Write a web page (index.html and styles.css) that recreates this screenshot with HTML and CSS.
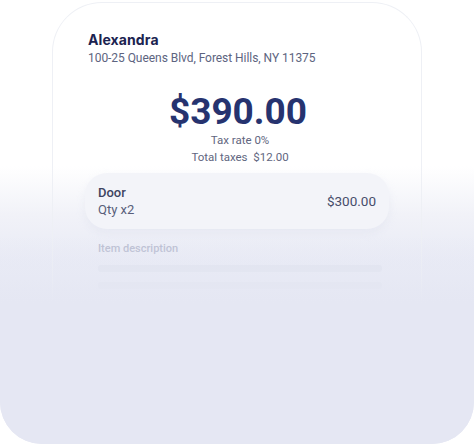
FILE: index.html
```html
<!DOCTYPE html>
<html lang="en">
<head>
    <meta charset="UTF-8">
    <meta name="viewport" content="width=device-width, initial-scale=1.0">
    <title>Invoice preview</title>
    <link rel="stylesheet" href="styles.css">
</head>
<body>

<div class="frame">
    <div class="card">
        <!-- Клієнт -->
        <div class="client">
            <div class="client-name">Alexandra</div>
            <div class="client-address">100-25 Queens Blvd, Forest Hills, NY 11375</div>
        </div>

        <!-- Сума -->
        <div class="total">
            <div class="total-amount">$390.00</div>
            <div class="total-line">Tax rate 0%</div>
            <div class="total-line">Total taxes&nbsp; $12.00</div>
        </div>

        <!-- Позиція -->
        <div class="item">
            <div>
                <div class="item-name">Door</div>
                <div class="item-qty">Qty x2</div>
            </div>
            <div class="item-price">$300.00</div>
        </div>

        <div class="field">
            <div class="field-label">Item description</div>
            <div class="field-bar"></div>
            <div class="field-bar"></div>
        </div>
    </div>
    <div class="fade"></div>
</div>

</body>
</html>
```

FILE: styles.css
```css
body {
    font-family: Roboto, "Liberation Sans", sans-serif;
    background-color: #ffffff;
    margin: 0;
    padding: 0;
}
.frame {
    position: relative;
    width: 474px;
    height: 444px;
    background: linear-gradient(to bottom, #ffffff 0, #ffffff 166px, #f1f2f8 215px, #e8eaf5 265px, #e5e7f3 305px, #e5e7f3 100%);
    border-radius: 0 0 42px 42px;
    overflow: hidden;
}
.card {
    margin: 2px 52px 0;
    height: 420px;
    border: 1px solid #eef0f5;
    border-bottom: none;
    border-radius: 50px 50px 0 0;
    padding: 28px 33px 0 35px;
}
.client-name {
    font-family: Inter, sans-serif;
    font-size: 14px;
    font-weight: 700;
    color: #1b2350;
    letter-spacing: 0.1px;
}
.client-address {
    margin-top: 3px;
    font-size: 12px;
    color: #5d6480;
    letter-spacing: -0.05px;
}
.total {
    margin-top: 27px;
    text-align: center;
    color: #5f6680;
}
.total-amount {
    font-size: 37px;
    font-weight: 700;
    color: #26336f;
    line-height: 40px;
}
.total-line {
    font-size: 11.5px;
    line-height: 17px;
    margin-left: 4px;
}
.total-line:first-of-type {
    margin-top: 9px;
}
.item {
    display: flex;
    justify-content: space-between;
    align-items: center;
    margin: 7px -1px 0 -3px;
    padding: 11px 13px 11px 13px;
    background-color: #f3f4f9;
    border-radius: 22px;
    box-shadow: 0 4px 10px rgba(200, 205, 225, 0.2);
}
.item-name {
    font-size: 13px;
    font-weight: 500;
    color: #3e4461;
    line-height: 17px;
}
.item-qty {
    font-size: 13px;
    color: #585e7a;
    line-height: 17px;
}
.item-price {
    font-size: 13.5px;
    color: #474d6b;
}
.field {
    margin-top: 13px;
    padding-left: 10px;
    padding-right: 6px;
}
.field-label {
    font-size: 11px;
    font-weight: 500;
    color: #b3b7cc;
}
.field-bar {
    height: 7px;
    margin-top: 10px;
    background-color: #dfe2ee;
    border-radius: 3px;
}
.fade {
    position: absolute;
    left: 0;
    right: 0;
    top: 238px;
    bottom: 0;
    background: linear-gradient(to bottom, rgba(233, 235, 245, 0.1) 0, rgba(231, 233, 244, 0.6) 40px, #e5e7f3 66px, #e5e7f3 100%);
    pointer-events: none;
}
```
